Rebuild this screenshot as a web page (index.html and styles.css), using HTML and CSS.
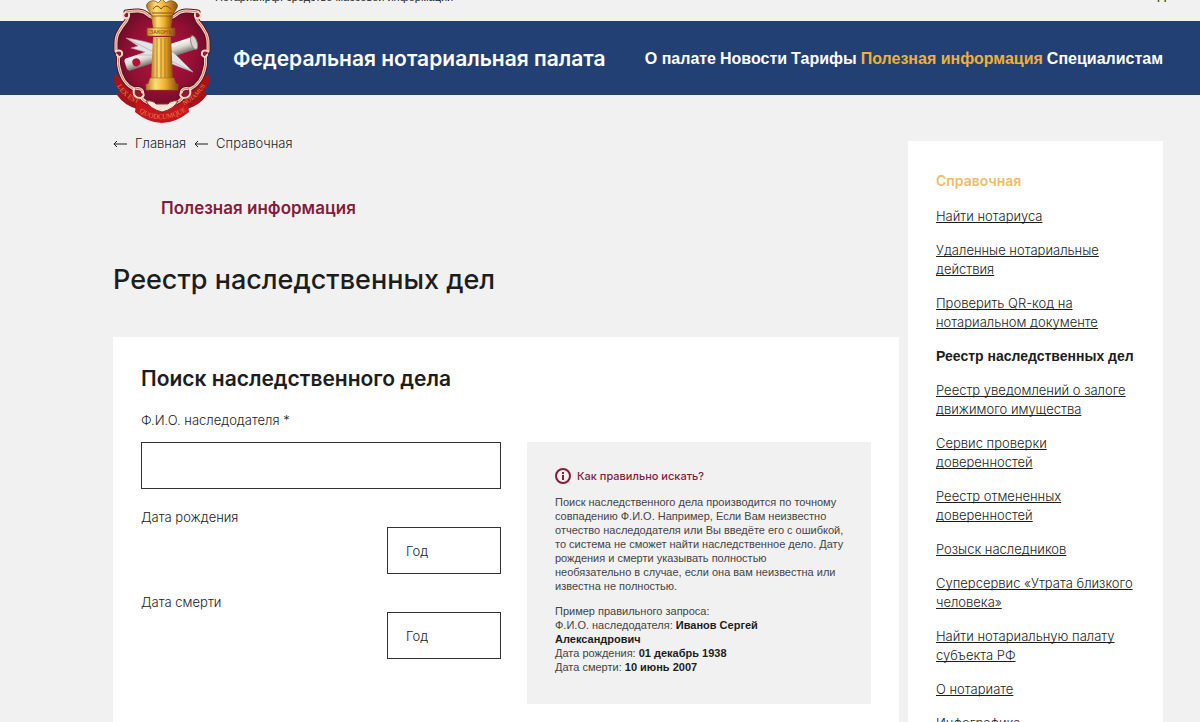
FILE: index.html
```html
<!DOCTYPE html>
<html lang="ru">
<head>
  <meta charset="UTF-8">
  <title>Реестр наследственных дел | Федеральная нотариальная палата</title>
  <meta name="viewport" content="width=device-width, initial-scale=1.0">
  <link rel="stylesheet" href="styles.css">
</head>
<body>
  <div class="topbar">
    <span>Нотариат.рф: средство массовой информации</span>
    <a class="login" href="#">Вход</a>
  </div>

  <header class="header">
    <a class="logo" href="#" aria-label="Федеральная нотариальная палата">
      <svg viewBox="0 0 100 124" width="100" height="124">
        <defs>
          <linearGradient id="gold" x1="0" x2="1">
            <stop offset="0" stop-color="#b8741a"/>
            <stop offset="0.3" stop-color="#ffe07a"/>
            <stop offset="0.6" stop-color="#eeb02c"/>
            <stop offset="1" stop-color="#8a4a10"/>
          </linearGradient>
          <radialGradient id="shield" cx="0.5" cy="0.45" r="0.6">
            <stop offset="0" stop-color="#b81440"/>
            <stop offset="0.6" stop-color="#920f34"/>
            <stop offset="1" stop-color="#5c0a22"/>
          </radialGradient>
          <linearGradient id="scroll" x1="0" y1="0" x2="0" y2="1">
            <stop offset="0" stop-color="#fff"/>
            <stop offset="0.5" stop-color="#d8d4cc"/>
            <stop offset="1" stop-color="#77736c"/>
          </linearGradient>
          <path id="outline" d="M50 17 C42 18 39 18 36 15 C30 9 21 11 14 12 C19 20 12 22 8 30 C3 37 4 43 4 51 C9 55 5 60 7 67 C9 78 15 86 22 89 C29 87 33 91 29 97 C33 105 43 103 50 110 C57 103 67 105 71 97 C67 91 71 87 78 89 C85 86 91 78 93 67 C95 60 91 55 96 51 C96 43 97 37 92 30 C88 22 81 20 86 12 C79 11 70 9 64 15 C61 18 58 18 50 17Z"/>
        </defs>
        <!-- ribbon -->
        <path d="M3 74 L18 84 Q22 91 30 96 L25 109 Q12 105 5 95 L8 91 Q0 84 3 74Z" fill="#a8131a"/>
        <path d="M97 74 L82 84 Q78 91 70 96 L75 109 Q88 105 95 95 L92 91 Q100 84 97 74Z" fill="#a8131a"/>
        <path d="M25 98 Q50 116 75 98 L77 112 Q50 134 23 112Z" fill="#c4161c"/>
        <!-- shield -->
        <use href="#outline" fill="url(#shield)" stroke="#5e1420" stroke-width="5" stroke-linejoin="round"/>
        <use href="#outline" fill="none" stroke="#f6d3c0" stroke-width="3" stroke-linejoin="round"/>
        <use href="#outline" fill="none" stroke="#b4483c" stroke-width="0.6"/>
        <g fill="#8d1d2c" stroke="#f8d8c6" stroke-width="2" stroke-linecap="round">
          <path d="M14 12q-5 3-1 6q5 1 4-4M86 12q5 3 1 6q-5 1-4-4"/>
          <path d="M4 51q7-2 6 4q-3 4-5 0M96 51q-7-2-6 4q3 4 5 0"/>
          <path d="M22 89q-2 9 7 9q5-3 1-6M78 89q2 9-7 9q-5-3-1-6"/>
        </g>
        <path d="M34 101q7-1 10 3h12q3-4 10-3q-4 8-16 11q-12-3-16-11z" fill="#f8e4d8" stroke="#8c3429"/>
        <!-- scroll and quill -->
        <g transform="rotate(-18 50 54)">
          <rect x="12" y="47" width="73" height="13" rx="3" fill="url(#scroll)"/>
          <ellipse cx="84" cy="53" rx="3" ry="7" fill="#d9d5cd" stroke="#8b877f"/>
          <circle cx="23" cy="54" r="4" fill="#b01238"/>
        </g>
        <path d="M14 38 C28 40 47 44 62 53 L81 72 L60 64 C52 62 46 57 39 55 L27 55 L33 52 L19 48 L26 46Z" fill="#e4e4e8" stroke="#a5a1a4" stroke-width="0.6"/>
        <path d="M16 39L81 72" stroke="#aaa7a9" stroke-width="0.7"/>
        <!-- column with its crown -->
        <path d="M41 37h18l2 43h-22z" fill="url(#gold)"/>
        <path d="M45 38v42M49 38v42M53 38v42M57 38v42" stroke="#b47a24" stroke-width="1"/>
        <path d="M38 78h24l2 6h2v6H34v-6h2z" fill="url(#gold)" stroke="#9b601b" stroke-width="0.5"/>
        <path d="M39 15h22l-2 13h-18z" fill="url(#gold)"/>
        <rect x="35" y="28" width="28" height="8" rx="1" fill="url(#gold)" stroke="#93540f" stroke-width="0.6"/>
        <text x="49" y="34" class="logo-plate">ЗАКОНЪ</text>
        <path d="M40 16L37 11Q32 5 37 2Q42-1 46 3L50-1L54 3Q58-1 63 2Q68 5 63 11L60 16Z" fill="url(#gold)" stroke="#71400e" stroke-width="0.7"/>
        <path d="M41 9q4-6 8 0q4-6 10 0M40 13h20" fill="none" stroke="#855015"/>
        <path id="rib1" d="M5 86Q12 98 25 103" fill="none"/>
        <path id="rib2" d="M27 112Q50 127 76 110" fill="none"/>
        <path id="rib3" d="M72 105Q88 98 97 79" fill="none"/>
        <text class="logo-text"><textPath href="#rib1">LEX EST</textPath></text>
        <text class="logo-text"><textPath href="#rib2">QUODCUMQUE</textPath></text>
        <text class="logo-text small"><textPath href="#rib3">NOTAMUS</textPath></text>
      </svg>
    </a>
    <a class="site-name" href="#">Федеральная нотариальная палата</a>
    <nav class="nav">
      <a href="#">О палате</a>
      <a href="#">Новости</a>
      <a href="#">Тарифы</a>
      <a href="#" class="active">Полезная информация</a>
      <a href="#">Специалистам</a>
    </nav>
  </header>

  <div class="page">
    <main>
      <nav class="breadcrumbs">
        <svg viewBox="0 0 14 8" width="14" height="8"><path d="M14 4H1M4 1L1 4L4 7"/></svg>
        <a href="#">Главная</a>
        <svg viewBox="0 0 14 8" width="14" height="8"><path d="M14 4H1M4 1L1 4L4 7"/></svg>
        <a href="#">Справочная</a>
      </nav>
      <p class="section-name">Полезная информация</p>
      <h1>Реестр наследственных дел</h1>

      <section class="card">
        <h2>Поиск наследственного дела</h2>
        <label class="label" for="fio">Ф.И.О. наследодателя *</label>
        <div class="search">
          <form>
            <input type="text" id="fio">
            <div class="date">
              <label class="label" for="birth">Дата рождения</label>
              <input type="text" id="birth" placeholder="Год">
            </div>
            <div class="date">
              <label class="label" for="death">Дата смерти</label>
              <input type="text" id="death" placeholder="Год">
            </div>
          </form>
          <div class="hint">
            <h3>
              <svg viewBox="0 0 16 16" width="16" height="16"><circle cx="8" cy="8" r="7"/><path d="M8 7v5M8 4v2"/></svg>
              Как правильно искать?
            </h3>
            <p>Поиск наследственного дела производится по точному<br>
              совпадению Ф.И.О. Например, Если Вам неизвестно<br>
              отчество наследодателя или Вы введёте его с ошибкой,<br>
              то система не сможет найти наследственное дело. Дату<br>
              рождения и смерти указывать полностью<br>
              необязательно в случае, если она вам неизвестна или<br>
              известна не полностью.</p>
            <p>Пример правильного запроса:<br>
              Ф.И.О. наследодателя: <b>Иванов Сергей<br>
              Александрович</b><br>
              Дата рождения: <b>01 декабрь 1938</b><br>
              Дата смерти: <b>10 июнь 2007</b></p>
          </div>
        </div>
      </section>
    </main>

    <aside class="sidebar">
      <h4>Справочная</h4>
      <ul>
        <li><a href="#">Найти нотариуса</a></li>
        <li><a href="#">Удаленные нотариальные<br>действия</a></li>
        <li><a href="#">Проверить QR-код на<br>нотариальном документе</a></li>
        <li><a href="#" class="current">Реестр наследственных дел</a></li>
        <li><a href="#">Реестр уведомлений о залоге<br>движимого имущества</a></li>
        <li><a href="#">Сервис проверки<br>доверенностей</a></li>
        <li><a href="#">Реестр отмененных<br>доверенностей</a></li>
        <li><a href="#">Розыск наследников</a></li>
        <li><a href="#">Суперсервис «Утрата близкого<br>человека»</a></li>
        <li><a href="#">Найти нотариальную палату<br>субъекта РФ</a></li>
        <li><a href="#">О нотариате</a></li>
        <li><a href="#">Инфографика</a></li>
      </ul>
    </aside>
  </div>
</body>
</html>
```
FILE: styles.css
```css
* {
  box-sizing: border-box;
}
body {
  margin: 0;
  height: 100vh;
  overflow: hidden;
  background: #f1f1f1;
  color: #1d1d1d;
  font-family: Inter, "Liberation Sans", sans-serif;
  font-size: 13px;
  font-weight: 300;
  line-height: 19px;
}
a {
  color: inherit;
  text-decoration: none;
}
h1, h2, h3, h4, p, ul {
  margin: 0;
  padding: 0;
}
.topbar {
  display: flex;
  justify-content: space-between;
  height: 21px;
  padding: 0 34px 0 215px;
  overflow: hidden;
  font-family: "Liberation Sans", sans-serif;
  font-size: 11px;
  line-height: 16px;
}
.topbar > * {
  margin-top: -11px;
}
.topbar .login {
  margin-top: -14px;
  font-size: 14px;
}
.header {
  display: flex;
  align-items: center;
  height: 74px;
  padding: 0 37px 0 233px;
  background: #234075;
  color: #fff;
  white-space: nowrap;
}
.logo {
  position: absolute;
  top: 0;
  left: 112px;
}
.logo svg {
  display: block;
}
.logo-plate {
  font-size: 5px;
  font-weight: 600;
  text-anchor: middle;
  fill: #a04b12;
}
.logo-text {
  font-family: "Liberation Serif", serif;
  font-size: 7px;
  font-weight: 400;
  fill: #f08050;
}
.logo-text.small {
  font-size: 6px;
}
.site-name {
  font-size: 21px;
  font-weight: 600;
}
.nav {
  display: flex;
  gap: 4px;
  margin-left: auto;
  font-family: "Liberation Sans", sans-serif;
  font-size: 16px;
  font-weight: 700;
}
.nav .active {
  color: #f0b136;
}
.page {
  display: flex;
  align-items: flex-start;
  gap: 9px;
  padding: 0 37px 0 113px;
}
main {
  flex: 1;
}
.breadcrumbs {
  display: flex;
  align-items: center;
  gap: 8px;
  margin-top: 39px;
}
.breadcrumbs svg {
  fill: none;
  stroke: #1d1d1d;
}
.section-name {
  margin: 46px 0 0 48px;
  color: #861c3c;
  font-size: 17px;
  font-weight: 600;
}
h1 {
  margin-top: 44px;
  font-size: 27px;
  font-weight: 500;
  line-height: 36px;
}
.card {
  margin-top: 39px;
  padding: 28px;
  background: #fff;
}
h2 {
  font-size: 21px;
  font-weight: 600;
  line-height: 28px;
}
.label {
  display: block;
}
h2 + .label {
  margin-top: 18px;
}
.search {
  display: grid;
  grid-template-columns: minmax(0, 360fr) minmax(0, 344fr);
  align-items: start;
  gap: 26px;
  margin-top: 12px;
}
input {
  display: block;
  width: 100%;
  height: 47px;
  padding: 0 18px;
  border: 1px solid #333;
  background: #fff;
  color: inherit;
  font: inherit;
}
input::placeholder {
  color: #1d1d1d;
  opacity: 1;
}
.date {
  margin-top: 19px;
}
.date input {
  width: 114px;
  margin-left: auto;
}
.hint {
  min-height: 262px;
  padding: 26px 28px;
  background: #f1f1f1;
  color: #444;
  font-family: "Liberation Sans", sans-serif;
  font-size: 11px;
  line-height: 14px;
  white-space: nowrap;
}
.hint h3 {
  display: flex;
  align-items: center;
  gap: 6px;
  color: #861c3c;
  font-family: Inter, sans-serif;
  font-size: 11px;
  font-weight: 500;
}
.hint svg {
  fill: none;
  stroke: #861c3c;
  stroke-width: 2;
}
.hint p {
  margin-top: 11px;
}
.hint b {
  color: #1d1d1d;
  font-weight: 700;
}
.sidebar {
  width: 255px;
  margin-top: 46px;
  padding: 30px 28px;
  background: #fff;
  white-space: nowrap;
}
.sidebar h4 {
  margin-bottom: 17px;
  color: #efbc6c;
  font-size: 14px;
  font-weight: 600;
}
.sidebar ul {
  list-style: none;
}
.sidebar li {
  margin-bottom: 15px;
}
.sidebar li a {
  text-decoration: underline;
  text-decoration-skip-ink: none;
  text-underline-offset: 1px;
}
.sidebar li .current {
  font-family: "Liberation Sans", sans-serif;
  font-size: 14px;
  font-weight: 700;
  text-decoration: none;
}
```
